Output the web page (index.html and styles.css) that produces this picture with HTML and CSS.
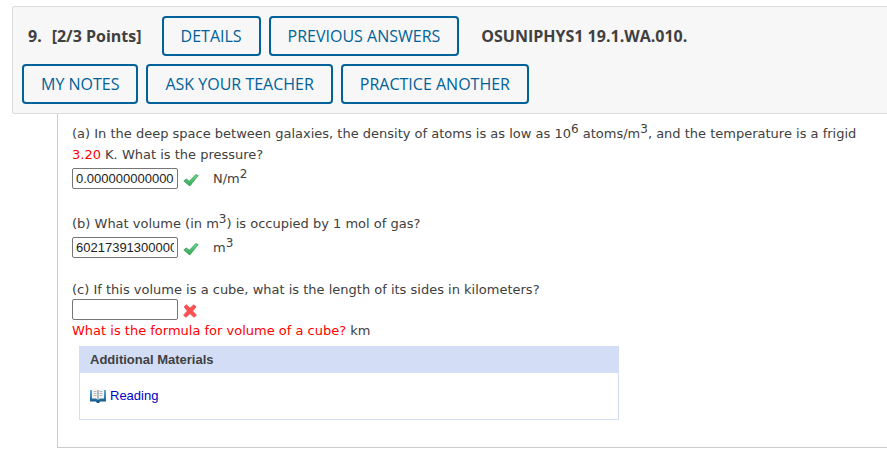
FILE: index.html
```html
<!DOCTYPE html>
<html lang="en">
<head>
<meta charset="utf-8">
<title>Question 9</title>
<link rel="stylesheet" href="styles.css">
</head>
<body>
<svg class="defs" aria-hidden="true">
  <defs>
    <linearGradient id="green" x1="0" y1="0" x2="0" y2="1"><stop offset="0" stop-color="#6fdb8c"/><stop offset="1" stop-color="#2fa455"/></linearGradient>
    <linearGradient id="cover" x1="0" y1="0" x2="0" y2="1"><stop offset="0" stop-color="#5fb0dc"/><stop offset="1" stop-color="#0d4f80"/></linearGradient>
    <symbol id="check" viewBox="0 0 16 16"><path d="M.8 9 3.200 7l3.200 2.200L12.800 2.600l2.400 1L6.800 14Z" fill="url(#green)" stroke="#3a9c58" stroke-width=".8" stroke-linejoin="round"/></symbol>
    <symbol id="cross" viewBox="0 0 16 16"><path d="m1.200 3.800 2.200-2L7 5.200l3.800-3.400 2.200 2L9.600 8l3.800 4.200-2.400 2L7 10.600l-4 3.600-2.400-2L4.400 8Z" fill="#ff5050" stroke="#f0404a" stroke-width=".8" stroke-linejoin="round"/></symbol>
  </defs>
</svg>
<main class="question">
  <header class="question-header">
    <div class="header-row">
      <h2 class="heading"><span class="number">9.</span><span class="points">[2/3 Points]</span></h2>
      <button class="btn" type="button">DETAILS</button>
      <button class="btn" type="button">PREVIOUS ANSWERS</button>
      <span class="code">OSUNIPHYS1 19.1.WA.010.</span>
    </div>
    <div class="header-row">
      <button class="btn" type="button">MY NOTES</button>
      <button class="btn" type="button">ASK YOUR TEACHER</button>
      <button class="btn" type="button">PRACTICE ANOTHER</button>
    </div>
  </header>
  <div class="question-body">
    <section class="part">
      <label class="prompt" for="a">(a) In the deep space between galaxies, the density of atoms is as low as 10<sup>6</sup> atoms/m<sup>3</sup>, and the temperature is a frigid <span class="red">3.20</span> K. What is the pressure?</label>
      <div class="answer"><input id="a" type="text" value="0.000000000000"><svg class="mark" role="img" aria-label="Correct"><use href="#check"/></svg><span class="unit">N/m<sup>2</sup></span></div>
    </section>
    <section class="part">
      <label class="prompt" for="b">(b) What volume (in m<sup>3</sup>) is occupied by 1 mol of gas?</label>
      <div class="answer"><input id="b" type="text" value="602173913000000000"><svg class="mark" role="img" aria-label="Correct"><use href="#check"/></svg><span class="unit">m<sup>3</sup></span></div>
    </section>
    <section class="part part-tight">
      <label class="prompt" for="c">(c) If this volume is a cube, what is the length of its sides in kilometers?</label>
      <div class="answer"><input id="c" type="text"><svg class="mark" role="img" aria-label="Incorrect"><use href="#cross"/></svg></div>
      <p class="feedback"><span class="red">What is the formula for volume of a cube?</span> km</p>
    </section>
    <section class="materials">
      <h3>Additional Materials</h3>
      <div class="materials-list">
        <a href="#reading"><svg class="book" viewBox="0 0 16 14" aria-hidden="true"><path d="M0 1h16v11.500h-6L9 14H7l-1-1.500H0Z" fill="url(#cover)"/><path d="M2 0h5l1 1 1-1h5v9.500h-4l-2 1.500-2-1.500H2Z" fill="#f4f3f0"/><path d="M3.500 2.500H6.500M3.500 4.500H6.500M3.500 6.500H6.500M9.500 2.500h3M9.500 4.500h3M9.500 6.500h3" stroke="#bcb8b2"/><path d="M8 1v10" stroke="#6c8799"/></svg>Reading</a>
      </div>
    </section>
  </div>
</main>
</body>
</html>
```
FILE: styles.css
```css
* { box-sizing: border-box; }
body { margin: 0; background: #fff; color: #404040; font: 13px/21px Verdana, "DejaVu Sans", sans-serif; }
.defs { position: absolute; width: 0; height: 0; }
.question { padding: 6px 0 0 12px; }
.question-header {
  display: flex; flex-direction: column; gap: 8px; padding: 9px;
  background: #f7f7f7; border: 1px solid #dcdcdc; border-right: 0; border-radius: 3px 0 0 3px;
}
.header-row { display: flex; align-items: center; gap: 8px; font: 16px/24px "Open Sans", sans-serif; }
.heading { display: flex; gap: 10px; margin: 0 12px 0 6px; font-size: 16px; font-weight: 700; }
.number { font-family: "Noto Sans", sans-serif; }
.code { margin-left: 14px; font-weight: 700; }
.btn {
  height: 40px; padding: 0 17px; border: 2px solid #006298; border-radius: 4px;
  background: #f7f7f7; color: #006298; font: 500 16px/24px "Open Sans", sans-serif; white-space: nowrap;
}
.question-body { margin-left: 45px; padding: 9px 15px 27px 14px; border: 1px solid #ccc; border-width: 0 0 1px 1px; }
.part { margin-bottom: 24px; }
.part-tight { margin-bottom: 5px; }
.prompt { display: block; margin-bottom: 3px; }
.part-tight .prompt { margin: -3px 0 -1px; }
.red { color: #f00; }
sup { font-size: 12px; line-height: 0; }
.answer { display: flex; align-items: center; }
.answer input {
  width: 106px; height: 21px; padding: 1px 3px; border: 1px solid #767676; border-radius: 2px;
  background: #fff; color: #222; font: 13px/17px "Liberation Sans", Arial, sans-serif;
}
.mark { width: 16px; height: 16px; margin: 3px 14px 0 5px; }
.feedback { margin: 0; }
.materials { max-width: 540px; margin: 0 7px; border: 1px solid #d3def6; font: 13px/20px "Liberation Sans", Arial, sans-serif; }
.materials h3 { margin: 0; padding: 3px 10px; background: #d3def6; font-size: 13px; }
.materials-list { padding: 13px 10px; }
.materials a { display: flex; width: fit-content; align-items: center; gap: 4px; color: #0000c8; text-decoration: none; }
.book { width: 16px; height: 14px; }
```
